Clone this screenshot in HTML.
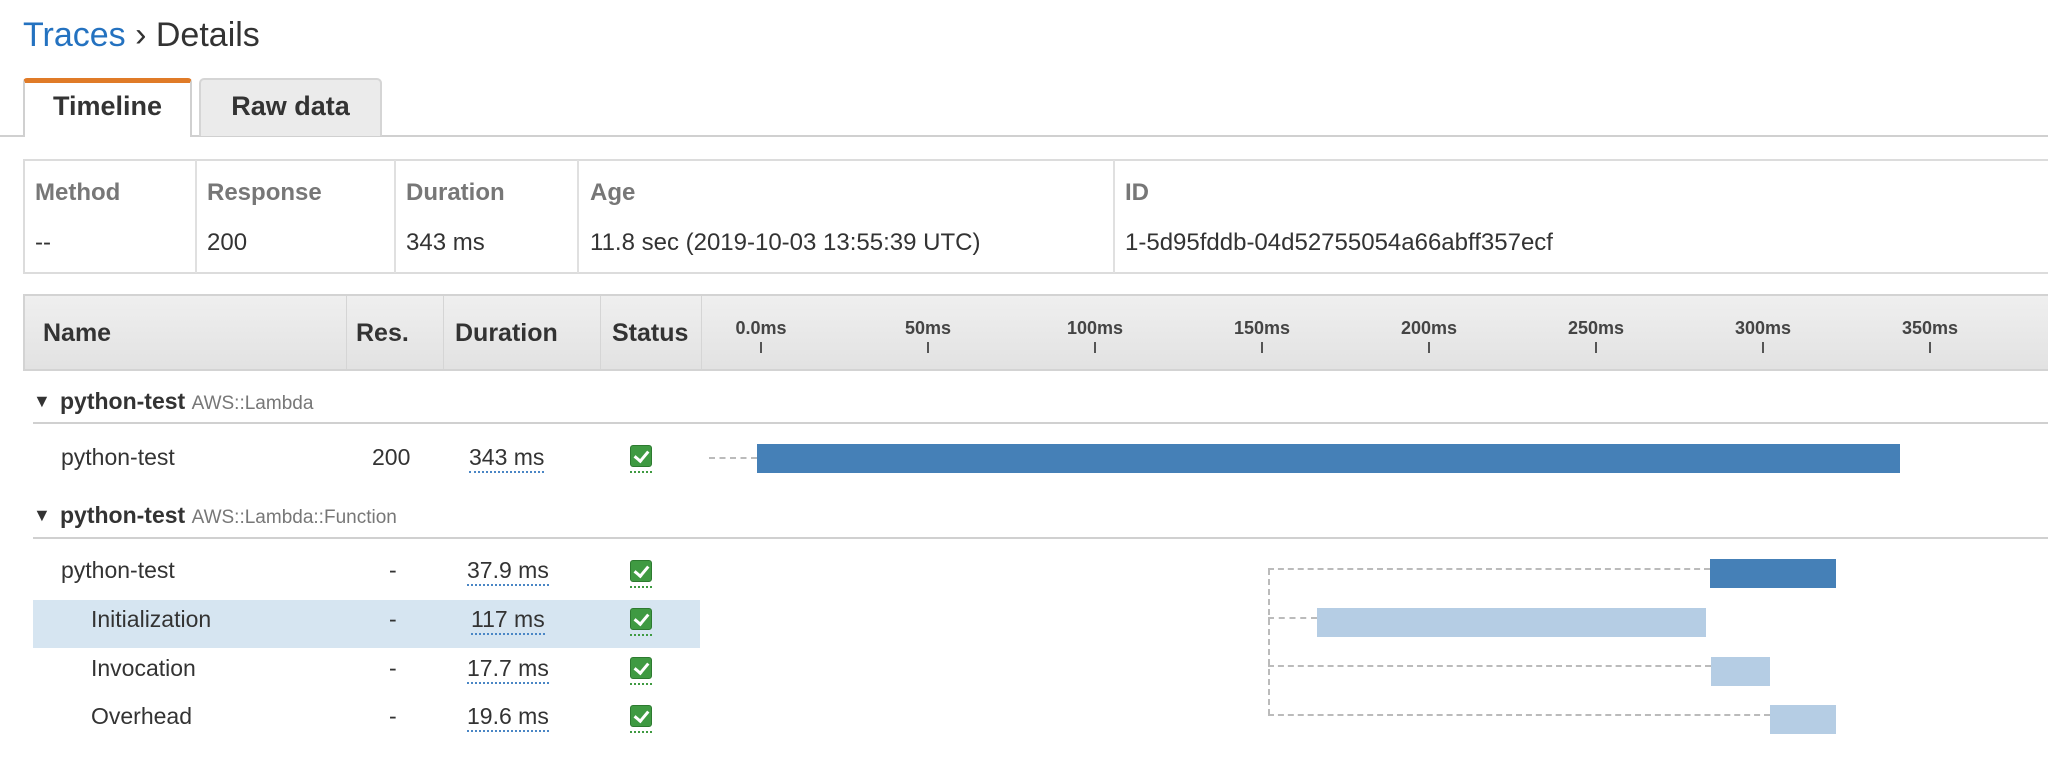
<!DOCTYPE html>
<html><head><meta charset="utf-8"><style>
*{margin:0;padding:0;box-sizing:border-box}
body{width:2048px;height:783px;background:#fff;font-family:"Liberation Sans",Arial,sans-serif;color:#333;position:relative;overflow:hidden}
.a{position:absolute;white-space:nowrap}
.hl{position:absolute;height:2px;background:#d0d0d0}
.vl{position:absolute;width:2px;background:#e0e0e0}
.th{font-weight:bold;color:#777;font-size:24px}
.tv{font-size:24px;color:#333}
.hd{font-weight:bold;font-size:25px;color:#333}
.tk{font-weight:bold;font-size:18px;color:#444;transform:translateX(-50%)}
.tick{position:absolute;width:2px;height:11px;background:#555;top:342px}
.nm{font-size:23px;color:#333}
.du{font-size:23px;color:#333;border-bottom:2px dotted #4a86c5;line-height:28px}
.ck{position:absolute;width:22px;height:22px;background:#3f9a42;border-radius:3px;border:1px solid #2d7a30}
.ck:after{content:"";position:absolute;left:6px;top:2px;width:6px;height:11px;border:solid #fff;border-width:0 3px 3px 0;transform:rotate(40deg)}
.ckl{position:absolute;width:22px;border-bottom:2px dotted #3f9a42}
.bar{position:absolute;height:29px}
.d{background:#4580b7}.l{background:#b5cde4}
.dh{position:absolute;height:0;border-top:2px dashed #bbb}
.dv{position:absolute;width:0;border-left:2px dashed #bbb}
</style></head><body>
<div class="a" style="left:23px;top:16px;font-size:34px;color:#333"><span style="color:#2472c0">Traces</span> › Details</div>

<div class="hl" style="left:0;top:135px;width:2048px"></div>
<div class="a" style="left:23px;top:78px;width:169px;height:59px;background:#fff;border:2px solid #d0d0d0;border-bottom:none;border-top:5px solid #e07b28;border-radius:4px 4px 0 0"></div>
<div class="a" style="left:23px;top:91px;width:169px;text-align:center;font-weight:bold;font-size:27px;color:#333">Timeline</div>
<div class="a" style="left:199px;top:78px;width:183px;height:58px;background:#ebebeb;border:2px solid #d5d5d5;border-bottom:none;border-radius:5px 5px 0 0"></div>
<div class="a" style="left:199px;top:91px;width:183px;text-align:center;font-weight:bold;font-size:27px;color:#333">Raw data</div>

<div class="a" style="left:23px;top:159px;width:2040px;height:115px;border:2px solid #dcdcdc"></div>
<div class="vl" style="left:195px;top:160px;height:113px"></div>
<div class="vl" style="left:394px;top:160px;height:113px"></div>
<div class="vl" style="left:577px;top:160px;height:113px"></div>
<div class="vl" style="left:1113px;top:160px;height:113px"></div>
<div class="a th" style="left:35px;top:179px">Method</div>
<div class="a th" style="left:207px;top:179px">Response</div>
<div class="a th" style="left:406px;top:179px">Duration</div>
<div class="a th" style="left:590px;top:179px">Age</div>
<div class="a th" style="left:1125px;top:179px">ID</div>
<div class="a tv" style="left:35px;top:229px">--</div>
<div class="a tv" style="left:207px;top:229px">200</div>
<div class="a tv" style="left:406px;top:229px">343 ms</div>
<div class="a tv" style="left:590px;top:229px">11.8 sec (2019-10-03 13:55:39 UTC)</div>
<div class="a tv" style="left:1125px;top:229px">1-5d95fddb-04d52755054a66abff357ecf</div>

<div class="a" style="left:23px;top:294px;width:2040px;height:77px;background:linear-gradient(#efefef,#e2e2e2);border:2px solid #d3d3d3"></div>
<div class="vl" style="left:346px;top:296px;height:73px;background:#d5d5d5;width:1px"></div>
<div class="vl" style="left:443px;top:296px;height:73px;background:#d5d5d5;width:1px"></div>
<div class="vl" style="left:600px;top:296px;height:73px;background:#d5d5d5;width:1px"></div>
<div class="vl" style="left:701px;top:296px;height:73px;background:#d5d5d5;width:1px"></div>
<div class="a hd" style="left:43px;top:319px">Name</div>
<div class="a hd" style="left:356px;top:319px">Res.</div>
<div class="a hd" style="left:455px;top:319px">Duration</div>
<div class="a hd" style="left:612px;top:319px">Status</div>
<div class="a tk" style="left:761px;top:318px">0.0ms</div><div class="tick" style="left:760px"></div>
<div class="a tk" style="left:928px;top:318px">50ms</div><div class="tick" style="left:927px"></div>
<div class="a tk" style="left:1095px;top:318px">100ms</div><div class="tick" style="left:1094px"></div>
<div class="a tk" style="left:1262px;top:318px">150ms</div><div class="tick" style="left:1261px"></div>
<div class="a tk" style="left:1429px;top:318px">200ms</div><div class="tick" style="left:1428px"></div>
<div class="a tk" style="left:1596px;top:318px">250ms</div><div class="tick" style="left:1595px"></div>
<div class="a tk" style="left:1763px;top:318px">300ms</div><div class="tick" style="left:1762px"></div>
<div class="a tk" style="left:1930px;top:318px">350ms</div><div class="tick" style="left:1929px"></div>

<div class="a" style="left:33px;top:391px;font-size:18px;color:#333">▼</div>
<div class="a" style="left:60px;top:388px;font-size:23px;font-weight:bold;color:#333">python-test <span style="font-weight:normal;font-size:19px;color:#777">AWS::Lambda</span></div>
<div class="hl" style="left:33px;top:422px;width:2015px"></div>
<div class="a nm" style="left:61px;top:444px">python-test</div>
<div class="a nm" style="left:372px;top:444px">200</div>
<div class="a du" style="left:469px;top:443px">343 ms</div>
<div class="ck" style="left:630px;top:445px"></div><div class="ckl" style="left:630px;top:471px"></div>
<div class="dh" style="left:709px;top:457px;width:48px"></div>
<div class="bar d" style="left:757px;top:444px;width:1143px"></div>

<div class="a" style="left:33px;top:505px;font-size:18px;color:#333">▼</div>
<div class="a" style="left:60px;top:502px;font-size:23px;font-weight:bold;color:#333">python-test <span style="font-weight:normal;font-size:19px;color:#777">AWS::Lambda::Function</span></div>
<div class="hl" style="left:33px;top:537px;width:2015px"></div>

<div class="a" style="left:33px;top:600px;width:667px;height:48px;background:#d6e5f1"></div>

<div class="a nm" style="left:61px;top:557px">python-test</div>
<div class="a nm" style="left:91px;top:606px">Initialization</div>
<div class="a nm" style="left:91px;top:655px">Invocation</div>
<div class="a nm" style="left:91px;top:703px">Overhead</div>
<div class="a nm" style="left:389px;top:557px">-</div>
<div class="a nm" style="left:389px;top:606px">-</div>
<div class="a nm" style="left:389px;top:655px">-</div>
<div class="a nm" style="left:389px;top:703px">-</div>
<div class="a du" style="left:467px;top:556px">37.9 ms</div>
<div class="a du" style="left:471px;top:605px">117 ms</div>
<div class="a du" style="left:467px;top:654px">17.7 ms</div>
<div class="a du" style="left:467px;top:702px">19.6 ms</div>
<div class="ck" style="left:630px;top:560px"></div><div class="ckl" style="left:630px;top:586px"></div>
<div class="ck" style="left:630px;top:608px"></div><div class="ckl" style="left:630px;top:634px"></div>
<div class="ck" style="left:630px;top:657px"></div><div class="ckl" style="left:630px;top:683px"></div>
<div class="ck" style="left:630px;top:705px"></div><div class="ckl" style="left:630px;top:731px"></div>

<div class="dv" style="left:1268px;top:569px;height:146px"></div>
<div class="dh" style="left:1268px;top:568px;width:442px"></div>
<div class="dh" style="left:1268px;top:617px;width:49px"></div>
<div class="dh" style="left:1268px;top:665px;width:443px"></div>
<div class="dh" style="left:1268px;top:714px;width:502px"></div>
<div class="bar d" style="left:1710px;top:559px;width:126px"></div>
<div class="bar l" style="left:1317px;top:608px;width:389px"></div>
<div class="bar l" style="left:1711px;top:657px;width:59px"></div>
<div class="bar l" style="left:1770px;top:705px;width:66px"></div>
</body></html>
